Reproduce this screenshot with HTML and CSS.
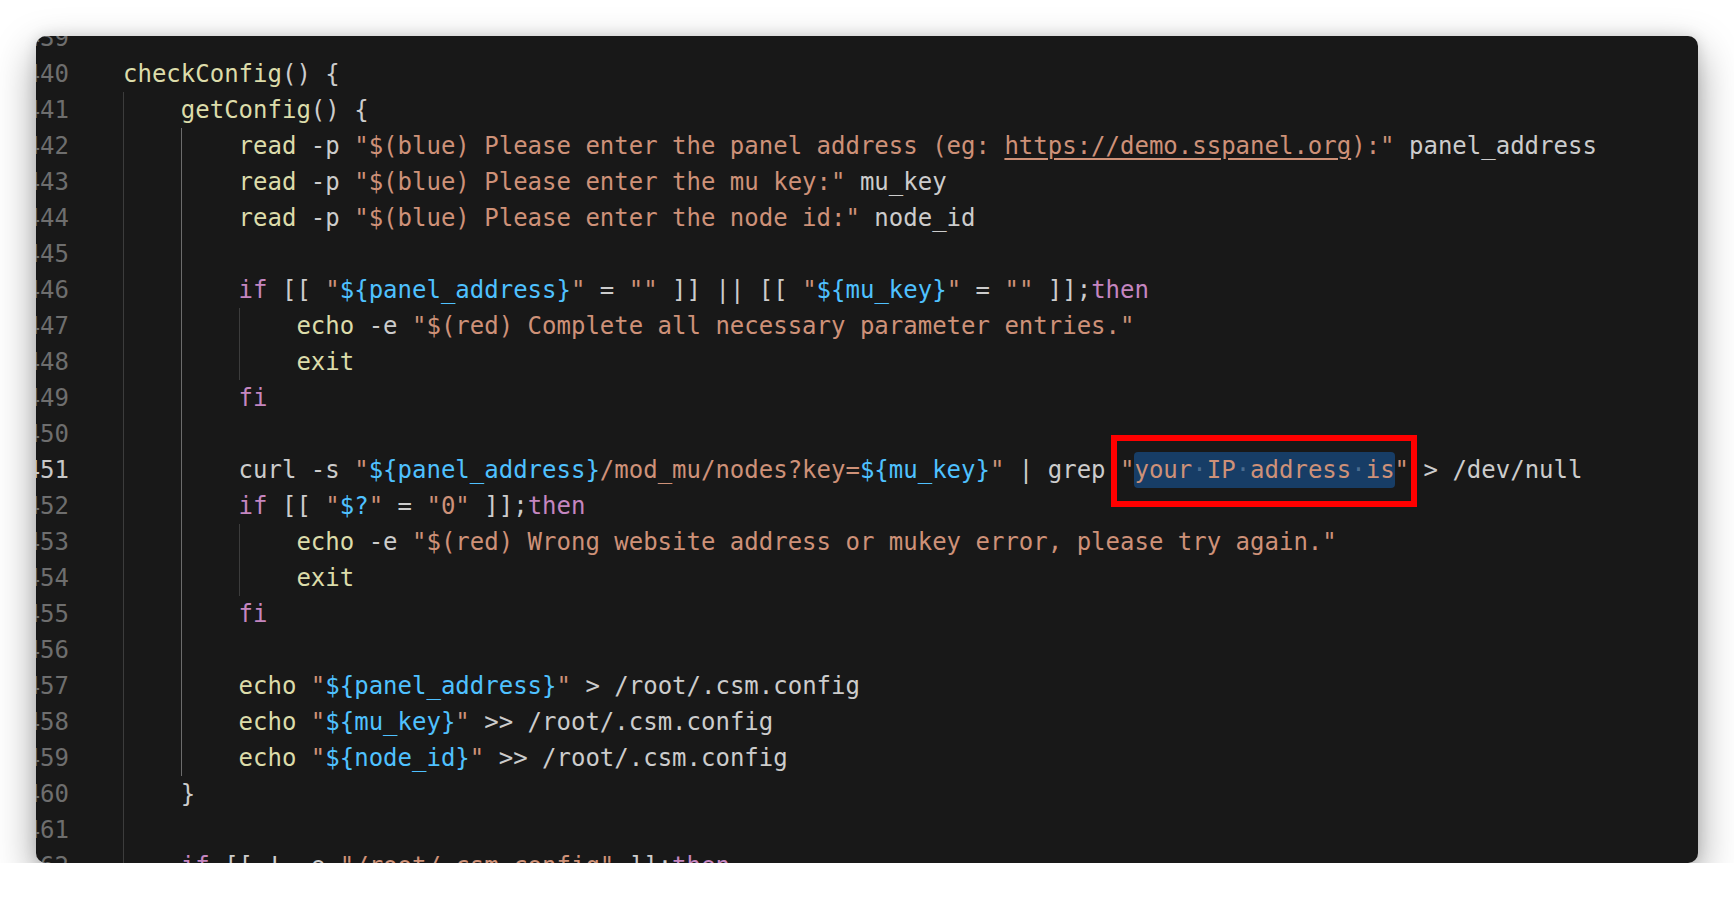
FILE: index.html
```html
<!DOCTYPE html>
<html lang="en">
<head>
    <meta charset="UTF-8">
    <title>csm.sh</title>
    <link rel="stylesheet" href="styles.css">
</head>
<body>
    <div class="editor">
        <div class="code">
            <div class="line"><div class="ln">439</div><div class="src"></div></div>
            <div class="line"><div class="ln">440</div><div class="src"><span class="fn">checkConfig</span>() {</div></div>
            <div class="line"><div class="ln">441</div><div class="src"><span class="ig">    </span><span class="fn">getConfig</span>() {</div></div>
            <div class="line"><div class="ln">442</div><div class="src"><span class="ig">    </span><span class="ig on">    </span><span class="fn">read</span> -p <span class="str">"$(blue) Please enter the panel address (eg: <span class="link">https://demo.sspanel.org</span>):"</span> panel_address</div></div>
            <div class="line"><div class="ln">443</div><div class="src"><span class="ig">    </span><span class="ig on">    </span><span class="fn">read</span> -p <span class="str">"$(blue) Please enter the mu key:"</span> mu_key</div></div>
            <div class="line"><div class="ln">444</div><div class="src"><span class="ig">    </span><span class="ig on">    </span><span class="fn">read</span> -p <span class="str">"$(blue) Please enter the node id:"</span> node_id</div></div>
            <div class="line"><div class="ln">445</div><div class="src"><span class="ig">    </span><span class="ig on">    </span></div></div>
            <div class="line"><div class="ln">446</div><div class="src"><span class="ig">    </span><span class="ig on">    </span><span class="kw">if</span> [[ <span class="str">"</span><span class="var">${panel_address}</span><span class="str">"</span> = <span class="str">""</span> ]] || [[ <span class="str">"</span><span class="var">${mu_key}</span><span class="str">"</span> = <span class="str">""</span> ]];<span class="kw">then</span></div></div>
            <div class="line"><div class="ln">447</div><div class="src"><span class="ig">    </span><span class="ig on">    </span><span class="ig">    </span><span class="fn">echo</span> -e <span class="str">"$(red) Complete all necessary parameter entries."</span></div></div>
            <div class="line"><div class="ln">448</div><div class="src"><span class="ig">    </span><span class="ig on">    </span><span class="ig">    </span><span class="fn">exit</span></div></div>
            <div class="line"><div class="ln">449</div><div class="src"><span class="ig">    </span><span class="ig on">    </span><span class="kw">fi</span></div></div>
            <div class="line"><div class="ln">450</div><div class="src"><span class="ig">    </span><span class="ig on">    </span></div></div>
            <div class="line"><div class="ln active">451</div><div class="src"><span class="ig">    </span><span class="ig on">    </span>curl -s <span class="str">"</span><span class="var">${panel_address}</span><span class="str">/mod_mu/nodes?key=</span><span class="var">${mu_key}</span><span class="str">"</span> | grep <span class="mark str">"<span class="sel">your<span class="ws">·</span>IP<span class="ws">·</span>address<span class="ws">·</span>is</span>"</span> &gt; /dev/null</div></div>
            <div class="line"><div class="ln">452</div><div class="src"><span class="ig">    </span><span class="ig on">    </span><span class="kw">if</span> [[ <span class="str">"</span><span class="var">$?</span><span class="str">"</span> = <span class="str">"0"</span> ]];<span class="kw">then</span></div></div>
            <div class="line"><div class="ln">453</div><div class="src"><span class="ig">    </span><span class="ig on">    </span><span class="ig">    </span><span class="fn">echo</span> -e <span class="str">"$(red) Wrong website address or mukey error, please try again."</span></div></div>
            <div class="line"><div class="ln">454</div><div class="src"><span class="ig">    </span><span class="ig on">    </span><span class="ig">    </span><span class="fn">exit</span></div></div>
            <div class="line"><div class="ln">455</div><div class="src"><span class="ig">    </span><span class="ig on">    </span><span class="kw">fi</span></div></div>
            <div class="line"><div class="ln">456</div><div class="src"><span class="ig">    </span><span class="ig on">    </span></div></div>
            <div class="line"><div class="ln">457</div><div class="src"><span class="ig">    </span><span class="ig on">    </span><span class="fn">echo</span> <span class="str">"</span><span class="var">${panel_address}</span><span class="str">"</span> &gt; /root/.csm.config</div></div>
            <div class="line"><div class="ln">458</div><div class="src"><span class="ig">    </span><span class="ig on">    </span><span class="fn">echo</span> <span class="str">"</span><span class="var">${mu_key}</span><span class="str">"</span> &gt;&gt; /root/.csm.config</div></div>
            <div class="line"><div class="ln">459</div><div class="src"><span class="ig">    </span><span class="ig on">    </span><span class="fn">echo</span> <span class="str">"</span><span class="var">${node_id}</span><span class="str">"</span> &gt;&gt; /root/.csm.config</div></div>
            <div class="line"><div class="ln">460</div><div class="src"><span class="ig">    </span>}</div></div>
            <div class="line"><div class="ln">461</div><div class="src"><span class="ig">    </span></div></div>
            <div class="line"><div class="ln">462</div><div class="src"><span class="ig">    </span><span class="kw">if</span> [[ ! -e <span class="str">"/root/.csm.config"</span> ]];<span class="kw">then</span></div></div>
        </div>
    </div>
</body>
</html>
```

FILE: styles.css
```css
body {
    margin: 0;
    background-color: #ffffff;
}
.editor {
    margin: 36px 0 0 36px;
    width: 1662px;
    height: 827px;
    background-color: #181818;
    border-radius: 10px;
    overflow: hidden;
    box-shadow: 0 16px 40px rgba(0,0,0,0.38), 0 0 14px rgba(0,0,0,0.12);
    font-family: "DejaVu Sans Mono", "Liberation Mono", monospace;
    font-size: 24px;
    line-height: 36px;
    color: #cccccc;
}
.code {
    margin: -16px 0 0 -31px;
}
.line {
    display: grid;
    grid-template-columns: 64px 1fr;
    height: 36px;
}
.ln {
    text-align: right;
    color: #6e6e6e;
}
.ln.active {
    color: #c8c8c8;
}
.src {
    padding-left: 54px;
    white-space: pre;
    height: 36px;
}
.ig {
    display: inline-block;
    height: 36px;
    vertical-align: top;
    box-shadow: inset 1px 0 0 #3c3c3c;
}
.ig.on {
    box-shadow: inset 1px 0 0 #6c6c6c;
}
.fn { color: #dcdcaa; }
.str { color: #ce9178; }
.var { color: #4fc1ff; }
.kw { color: #c586c0; }
.link {
    text-decoration: underline;
    text-decoration-thickness: 2px;
    text-underline-offset: 4px;
}
.mark {
    position: relative;
    display: inline-block;
    height: 36px;
    vertical-align: top;
}
.mark::after {
    content: "";
    position: absolute;
    top: -17px;
    bottom: -19px;
    left: -9px;
    right: -8px;
    border: 6px solid #ff0000;
}
.sel {
    display: inline-block;
    height: 36px;
    vertical-align: top;
    background-color: #173d66;
    border-radius: 4px;
}
.ws {
    color: rgba(140,170,200,0.45);
}
```
